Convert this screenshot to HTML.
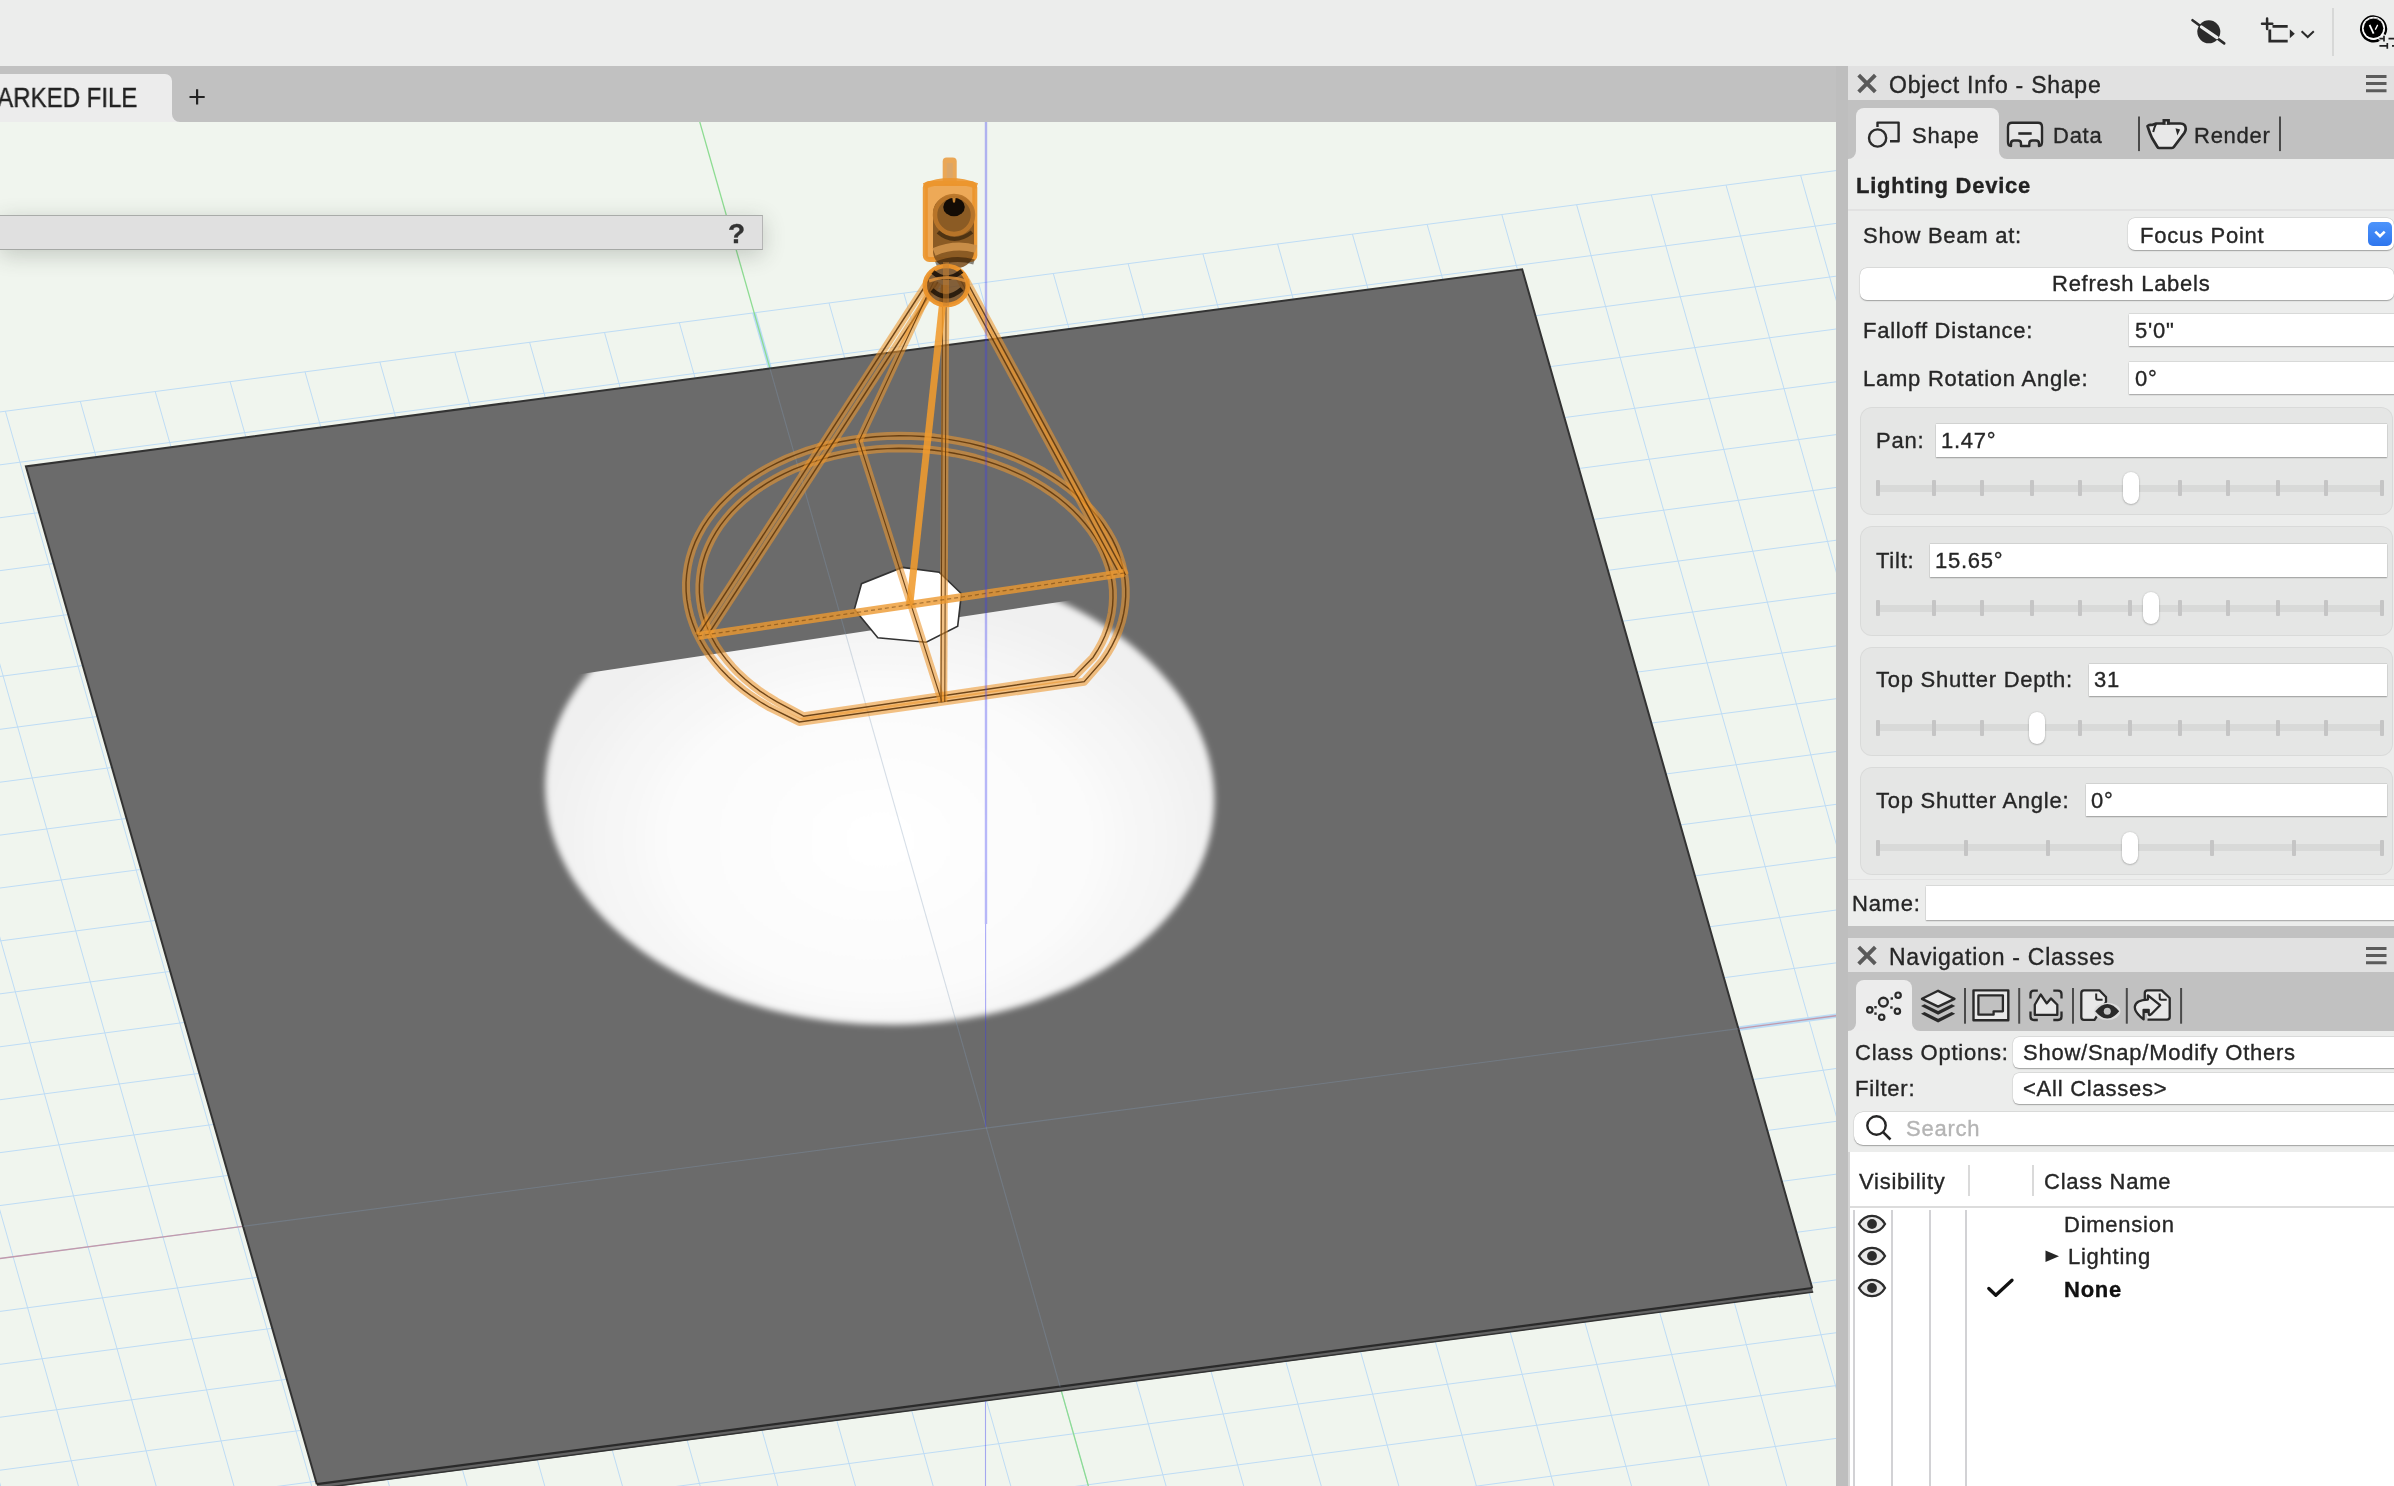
<!DOCTYPE html><html><head><meta charset="utf-8"><style>
*{box-sizing:border-box}
html,body{margin:0;padding:0;width:2394px;height:1486px;overflow:hidden;background:#ecedec;font-family:"Liberation Sans", sans-serif;color:#262626}
.abs{position:absolute}
.t{position:absolute;white-space:pre;font-size:23px;line-height:1;will-change:transform;-webkit-text-stroke:0.35px currentColor}
.fld{position:absolute;background:#fff;box-shadow:0 1px 1.2px rgba(0,0,0,0.3), 0 -0.6px 0 rgba(0,0,0,0.1), 0 0 0 0.5px rgba(0,0,0,0.05);}
.grp{position:absolute;background:#e5e6e5;border-radius:12px;box-shadow:inset 0 0 0 1px rgba(0,0,0,0.05)}
.sep{position:absolute;background:#525252;width:2px}
</style></head><body>
<div class="abs" style="left:0;top:0;width:2394px;height:66px;background:#ecedec"></div><svg class="abs" style="left:2180px;top:8px" width="214" height="50" viewBox="2180 8 214 50">
<circle cx="2208.8" cy="31.8" r="11.5" fill="#2b2b2b"/>
<line x1="2192.5" y1="20.2" x2="2224.2" y2="43.4" stroke="#2b2b2b" stroke-width="2.6" stroke-linecap="round"/>
<line x1="2201.5" y1="27" x2="2217" y2="37.6" stroke="#ecedec" stroke-width="3.3" stroke-linecap="round"/>
<path d="M2262 23.8H2272.3M2267.1 18.6V29" stroke="#2b2b2b" stroke-width="2.5" stroke-linecap="round"/>
<path d="M2272.5 26.4H2287.7M2269.8 29.5V41.1H2287.7" stroke="#2b2b2b" stroke-width="2.8" fill="none"/>
<path d="M2289.8 29.3L2294.8 33.8L2289.8 38.3Z" fill="#2b2b2b"/>
<path d="M2301.6 31.2L2307.7 37L2313.8 31.2" stroke="#2b2b2b" stroke-width="2" fill="none"/>
<line x1="2333" y1="8" x2="2333" y2="56" stroke="#d0d0d0" stroke-width="1.5"/>
<path d="M2381.5 38.3A12.3 12.3 0 1 1 2384.5 34.5" fill="none" stroke="#000" stroke-width="2.5"/>
<circle cx="2373.5" cy="28.2" r="10.9" fill="none" stroke="#fff" stroke-width="1.1"/>
<circle cx="2373.5" cy="28.2" r="9.8" fill="#000"/>
<path d="M2369.6 24.9L2373.6 33.6" stroke="#fff" stroke-width="1.8"/>
<path d="M2377.7 24.9L2375.3 29.6" stroke="#fff" stroke-width="1.3"/>
<circle cx="2380.5" cy="38.5" r="2.2" fill="#ecedec"/>
<path d="M2379.4 38.6H2384.4M2384 35.8V41.5M2388.5 38.6H2394M2379.4 45.9H2387.5M2387.3 43V48.8M2392 45.9H2394" stroke="#222" stroke-width="1.7"/>
</svg><div class="abs" style="left:0;top:66px;width:1836px;height:56px;background:#c1c1c1"></div>
<div class="abs" style="left:-20px;top:74px;width:192px;height:48px;background:#ececec;border-top-right-radius:7px"></div>
<svg class="abs" style="left:172px;top:114px" width="8" height="8"><path d="M0 0V8H8A8 8 0 0 1 0 0Z" fill="#ececec"/></svg>
<div class="t" style="left:-24.5px;top:84.2px;font-size:27.7px;color:#222;transform:scaleX(0.868);transform-origin:160.5px 0">ARKED FILE</div>
<svg class="abs" style="left:185px;top:85px" width="24" height="24"><path d="M4.5 12H19.7M12.1 4.3V19.5" stroke="#222" stroke-width="2.2"/></svg>
<svg class="abs" style="left:0;top:122px" width="1836" height="1364" viewBox="0 122 1836 1364">
<defs>
<filter id="blur" x="-10%" y="-10%" width="120%" height="120%"><feGaussianBlur stdDeviation="3.2"/></filter>
<radialGradient id="lg" gradientUnits="userSpaceOnUse" cx="880" cy="840" r="340" gradientTransform="translate(880 840) scale(1 0.72) translate(-880 -840)">
<stop offset="0" stop-color="#ffffff"/><stop offset="0.6" stop-color="#fbfbfb"/><stop offset="1" stop-color="#f0f0f0"/></radialGradient>
<clipPath id="cut"><path d="M0 761.2L1836 485.4L1836 1486L0 1486Z"/></clipPath>
<clipPath id="planeclip"><path d="M25.9 466.4L1522.2 269.3L1812.2 1288L316.8 1484.2Z"/></clipPath>
</defs>
<rect x="0" y="122" width="1836" height="1364" fill="#f0f5ee"/>
<path d="M-1495.2 608.4L-898.7 2702.0M-1420.1 598.6L-823.6 2692.0M-1345.0 588.7L-748.6 2681.9M-1269.9 578.8L-673.5 2671.9M-1194.8 569.0L-598.4 2661.9M-1119.7 559.1L-523.4 2651.9M-1044.6 549.2L-448.4 2641.9M-969.5 539.3L-373.3 2631.9M-894.5 529.5L-298.3 2621.9M-819.4 519.6L-223.3 2611.8M-744.4 509.8L-148.3 2601.8M-669.4 499.9L-73.3 2591.8M-594.4 490.0L1.6 2581.8M-519.4 480.2L76.6 2571.8M-444.4 470.3L151.6 2561.8M-369.4 460.5L226.5 2551.8M-294.4 450.6L301.4 2541.8M-219.4 440.8L376.4 2531.8M-144.5 430.9L451.3 2521.8M-69.5 421.0L526.2 2511.8M5.4 411.2L601.1 2501.8M80.3 401.4L676.0 2491.8M155.2 391.5L750.8 2481.8M230.1 381.7L825.7 2471.9M305.0 371.8L900.5 2461.9M379.9 362.0L975.4 2451.9M454.8 352.1L1050.2 2441.9M529.6 342.3L1125.0 2431.9M604.5 332.5L1199.8 2421.9M679.3 322.6L1274.6 2411.9M754.1 312.8L1349.4 2402.0M829.0 302.9L1424.2 2392.0M903.8 293.1L1499.0 2382.0M978.6 283.3L1573.7 2372.0M1053.3 273.5L1648.5 2362.1M1128.1 263.6L1723.2 2352.1M1202.9 253.8L1797.9 2342.1M1277.6 244.0L1872.6 2332.1M1352.4 234.1L1947.4 2322.2M1427.1 224.3L2022.0 2312.2M1501.8 214.5L2096.7 2302.2M1576.6 204.7L2171.4 2292.3M1651.3 194.9L2246.1 2282.3M1726.0 185.0L2320.7 2272.3M1800.6 175.2L2395.4 2262.4M1875.3 165.4L2470.0 2252.4M1950.0 155.6L2544.6 2242.5M2024.6 145.8L2619.2 2232.5M2099.3 136.0L2693.8 2222.6M2173.9 126.2L2768.4 2212.6M2248.5 116.4L2843.0 2202.6M2323.1 106.6L2917.6 2192.7M2397.7 96.7L2992.1 2182.7M2472.3 86.9L3066.7 2172.8M2546.9 77.1L3141.2 2162.9M2621.5 67.3L3215.8 2152.9M2696.0 57.5L3290.3 2143.0M2770.6 47.7L3364.8 2133.0M2845.1 37.9L3439.3 2123.1M2919.6 28.1L3513.8 2113.1M2994.2 18.4L3588.3 2103.2M-2247.1 707.3L3738.8 -79.5M-2232.5 758.4L3753.3 -28.7M-2218.0 809.5L3767.7 22.1M-2203.4 860.6L3782.2 72.9M-2188.9 911.7L3796.7 123.7M-2174.3 962.8L3811.2 174.5M-2159.7 1013.8L3825.7 225.4M-2145.2 1064.9L3840.1 276.2M-2130.6 1116.0L3854.6 327.0M-2116.1 1167.1L3869.1 377.8M-2101.5 1218.2L3883.6 428.6M-2087.0 1269.3L3898.1 479.4M-2072.4 1320.4L3912.5 530.2M-2057.8 1371.5L3927.0 581.1M-2043.3 1422.6L3941.5 631.9M-2028.7 1473.7L3956.0 682.7M-2014.2 1524.8L3970.5 733.5M-1999.6 1575.9L3984.9 784.3M-1985.0 1627.0L3999.4 835.1M-1970.5 1678.1L4013.9 885.9M-1955.9 1729.2L4028.4 936.8M-1941.4 1780.3L4042.9 987.6M-1926.8 1831.4L4057.3 1038.4M-1912.3 1882.5L4071.8 1089.2M-1897.7 1933.6L4086.3 1140.0M-1883.1 1984.7L4100.8 1190.8M-1868.6 2035.8L4115.3 1241.7M-1854.0 2086.9L4129.7 1292.5M-1839.5 2138.0L4144.2 1343.3M-1824.9 2189.1L4158.7 1394.1M-1810.3 2240.2L4173.2 1444.9M-1795.8 2291.3L4187.7 1495.7M-1781.2 2342.4L4202.2 1546.5M-1766.7 2393.5L4216.6 1597.4M-1752.1 2444.6L4231.1 1648.2M-1737.6 2495.7L4245.6 1699.0M-1723.0 2546.8L4260.1 1749.8M-1708.4 2597.9L4274.6 1800.6M-1693.9 2649.0L4289.0 1851.4M-1679.3 2700.1L4303.5 1902.3M-1664.8 2751.2L4318.0 1953.1M-1650.2 2802.3L4332.5 2003.9" stroke="#bedcf5" stroke-width="1" fill="none"/>
<line x1="1696.6" y1="1034.2" x2="1958.1" y2="999.6" stroke="#bcdcf5" stroke-width="4.6"/>
<line x1="-2014.2" y1="1524.8" x2="3970.5" y2="733.5" stroke="#c29aac" stroke-width="1.4"/>
<line x1="754.1" y1="312.8" x2="783.2" y2="414.7" stroke="#b9dcf6" stroke-width="4"/>
<line x1="405.7" y1="-910.1" x2="1349.4" y2="2402.0" stroke="#8ddc92" stroke-width="1.3"/>
<path d="M316.8 1484.2L1812.2 1288L1813.2 1292.2L317.5 1489Z" fill="#636363"/>
<path d="M317.5 1488.5L1813.2 1292" stroke="#333" stroke-width="1.5"/>
<path d="M25.9 466.4L1522.2 269.3L1812.2 1288L316.8 1484.2Z" fill="#6b6b6b"/>
<path d="M316.8 1484.2L25.9 466.4L1522.2 269.3L1812.2 1288" fill="none" stroke="#333" stroke-width="2"/>
<path d="M316.8 1484.2L1812.2 1288" fill="none" stroke="#2a2a2a" stroke-width="2.2"/>
<g clip-path="url(#cut)"><g filter="url(#blur)"><path d="M870.6 1024.3L858.9 1023.7L847.3 1022.8L835.7 1021.7L824.2 1020.2L812.7 1018.5L801.3 1016.5L790.0 1014.2L778.8 1011.7L767.7 1008.9L756.8 1005.8L746.0 1002.5L735.4 998.9L724.9 995.1L714.7 991.0L704.6 986.7L694.8 982.1L685.2 977.3L675.8 972.3L666.7 967.1L657.8 961.7L649.2 956.0L640.9 950.2L632.8 944.1L625.1 937.9L617.7 931.5L610.6 924.9L603.8 918.2L597.4 911.3L591.3 904.3L585.6 897.1L580.2 889.8L575.2 882.4L570.5 874.9L566.3 867.3L562.4 859.6L558.9 851.8L555.8 843.9L553.1 836.0L550.7 828.0L548.8 820.0L547.3 812.0L546.2 803.9L545.5 795.8L545.2 787.7L545.3 779.6L545.9 771.6L546.8 763.5L548.1 755.5L549.9 747.5L552.0 739.6L554.5 731.8L557.5 724.0L560.8 716.3L564.5 708.8L568.6 701.3L573.1 693.9L578.0 686.6L583.2 679.5L588.8 672.5L594.7 665.7L601.0 659.0L607.6 652.5L614.6 646.1L621.9 639.9L629.5 633.9L637.4 628.1L645.5 622.6L654.0 617.2L662.8 612.0L671.8 607.0L681.1 602.3L690.6 597.8L700.3 593.6L710.3 589.6L720.5 585.8L730.8 582.3L741.4 579.0L752.1 576.0L763.0 573.3L774.0 570.8L785.1 568.6L796.4 566.7L807.7 565.1L819.2 563.7L830.7 562.6L842.3 561.8L853.9 561.3L865.5 561.0L877.2 561.1L888.9 561.4L900.6 562.0L912.2 562.9L923.8 564.0L935.4 565.5L946.8 567.2L958.2 569.2L969.5 571.5L980.7 574.0L991.8 576.8L1002.7 579.9L1013.5 583.2L1024.1 586.8L1034.6 590.6L1044.8 594.7L1054.9 599.0L1064.7 603.6L1074.3 608.3L1083.7 613.3L1092.9 618.6L1101.7 624.0L1110.3 629.7L1118.6 635.5L1126.7 641.6L1134.4 647.8L1141.8 654.2L1148.9 660.7L1155.7 667.5L1162.1 674.4L1168.2 681.4L1173.9 688.6L1179.3 695.8L1184.3 703.2L1189.0 710.8L1193.3 718.4L1197.1 726.1L1200.6 733.9L1203.7 741.7L1206.5 749.7L1208.8 757.6L1210.7 765.7L1212.2 773.7L1213.3 781.8L1214.0 789.9L1214.3 798.0L1214.2 806.1L1213.7 814.1L1212.7 822.2L1211.4 830.2L1209.7 838.1L1207.5 846.0L1205.0 853.9L1202.0 861.7L1198.7 869.3L1195.0 876.9L1190.9 884.4L1186.4 891.8L1181.5 899.1L1176.3 906.2L1170.7 913.2L1164.8 920.0L1158.5 926.7L1151.9 933.2L1144.9 939.6L1137.7 945.8L1130.1 951.7L1122.2 957.5L1114.0 963.1L1105.5 968.5L1096.7 973.7L1087.7 978.6L1078.4 983.4L1068.9 987.9L1059.2 992.1L1049.2 996.1L1039.0 999.9L1028.7 1003.4L1018.1 1006.7L1007.4 1009.7L996.6 1012.4L985.5 1014.9L974.4 1017.1L963.1 1019.0L951.8 1020.6L940.3 1022.0L928.8 1023.1L917.2 1023.9L905.6 1024.4L894.0 1024.7L882.3 1024.6Z" fill="url(#lg)"/></g></g>
<g clip-path="url(#planeclip)">
<line x1="-2014.2" y1="1524.8" x2="3970.5" y2="733.5" stroke="rgba(130,155,185,0.32)" stroke-width="1.1"/>
<line x1="405.7" y1="-910.1" x2="1349.4" y2="2402.0" stroke="rgba(130,155,185,0.32)" stroke-width="1.1"/>
</g>
<g>
<path d="M902.2 567.4L939.2 572.2L961.4 593.7L957.7 626.2L926.2 642.2L877.8 637.7L854.4 609.2L861.5 583.7Z" fill="#ffffff" stroke="#333" stroke-width="1.6"/>
<path d="M799.3 722.0L769.7 707.5L760.5 702.0L751.8 696.2L743.5 690.1L735.7 683.7L728.4 677.0L721.6 670.1L715.3 662.9L709.6 655.5L704.5 647.9L700.0 640.1L696.1 632.2L692.9 624.1L690.2 616.0L688.2 607.7L686.8 599.4L686.1 591.1L686.0 582.8L686.6 574.5L687.8 566.2L689.6 558.0L692.1 549.9L695.2 541.9L699.0 534.1L703.3 526.4L708.3 518.9L713.8 511.6L719.9 504.5L726.6 497.7L733.8 491.1L741.5 484.9L749.6 478.9L758.3 473.3L767.3 468.0L776.8 463.1L786.7 458.5L796.9 454.4L807.4 450.6L818.2 447.2L829.3 444.3L840.6 441.8L852.1 439.7L863.8 438.0L875.5 436.8L887.4 436.1L899.3 435.8L911.3 435.9L923.2 436.5L935.1 437.6L946.9 439.1L958.5 441.1L970.0 443.4L981.4 446.3L992.5 449.5L1003.3 453.1L1013.9 457.2L1024.1 461.6L1034.0 466.4L1043.5 471.6L1052.6 477.1L1061.3 483.0L1069.5 489.1L1077.3 495.6L1084.5 502.3L1091.2 509.3L1097.3 516.5L1102.9 524.0L1107.9 531.6L1112.4 539.4L1116.2 547.4L1119.3 555.4L1121.9 563.6L1123.8 571.9L1125.1 580.1L1125.7 588.5L1125.7 596.8L1125.0 605.1L1123.7 613.4L1121.8 621.5L1119.2 629.6L1115.9 637.6L1112.1 645.4L1107.7 653.1L1102.6 660.6L1084.2 681.7Z" fill="none" stroke="rgba(236,150,44,0.58)" stroke-width="8" stroke-linejoin="round"/>
<path d="M799.3 722.0L769.7 707.5L760.5 702.0L751.8 696.2L743.5 690.1L735.7 683.7L728.4 677.0L721.6 670.1L715.3 662.9L709.6 655.5L704.5 647.9L700.0 640.1L696.1 632.2L692.9 624.1L690.2 616.0L688.2 607.7L686.8 599.4L686.1 591.1L686.0 582.8L686.6 574.5L687.8 566.2L689.6 558.0L692.1 549.9L695.2 541.9L699.0 534.1L703.3 526.4L708.3 518.9L713.8 511.6L719.9 504.5L726.6 497.7L733.8 491.1L741.5 484.9L749.6 478.9L758.3 473.3L767.3 468.0L776.8 463.1L786.7 458.5L796.9 454.4L807.4 450.6L818.2 447.2L829.3 444.3L840.6 441.8L852.1 439.7L863.8 438.0L875.5 436.8L887.4 436.1L899.3 435.8L911.3 435.9L923.2 436.5L935.1 437.6L946.9 439.1L958.5 441.1L970.0 443.4L981.4 446.3L992.5 449.5L1003.3 453.1L1013.9 457.2L1024.1 461.6L1034.0 466.4L1043.5 471.6L1052.6 477.1L1061.3 483.0L1069.5 489.1L1077.3 495.6L1084.5 502.3L1091.2 509.3L1097.3 516.5L1102.9 524.0L1107.9 531.6L1112.4 539.4L1116.2 547.4L1119.3 555.4L1121.9 563.6L1123.8 571.9L1125.1 580.1L1125.7 588.5L1125.7 596.8L1125.0 605.1L1123.7 613.4L1121.8 621.5L1119.2 629.6L1115.9 637.6L1112.1 645.4L1107.7 653.1L1102.6 660.6L1084.2 681.7Z" fill="none" stroke="rgba(95,55,12,0.9)" stroke-width="1.4"/>
<path d="M803.6 716.2L776.6 701.7L768.1 696.5L760.0 691.1L752.3 685.3L745.1 679.2L738.3 672.9L732.1 666.4L726.3 659.6L721.0 652.7L716.3 645.6L712.2 638.3L708.6 630.9L705.6 623.4L703.2 615.7L701.3 608.0L700.1 600.3L699.4 592.6L699.4 584.8L700.0 577.1L701.1 569.4L702.9 561.7L705.2 554.2L708.2 546.8L711.7 539.5L715.8 532.3L720.4 525.4L725.6 518.6L731.3 512.0L737.5 505.7L744.2 499.6L751.4 493.8L759.0 488.3L767.0 483.1L775.5 478.2L784.3 473.6L793.5 469.4L803.1 465.6L812.9 462.1L823.0 458.9L833.3 456.2L843.9 453.9L854.6 451.9L865.5 450.4L876.5 449.3L887.6 448.6L898.7 448.3L909.9 448.5L921.0 449.1L932.1 450.0L943.2 451.4L954.1 453.2L964.9 455.4L975.5 458.0L985.9 461.0L996.1 464.4L1006.0 468.2L1015.6 472.3L1024.9 476.7L1033.9 481.5L1042.5 486.6L1050.7 492.1L1058.5 497.8L1065.8 503.8L1072.7 510.0L1079.0 516.5L1084.9 523.2L1090.3 530.1L1095.1 537.2L1099.4 544.5L1103.1 551.9L1106.2 559.4L1108.8 567.0L1110.7 574.6L1112.1 582.4L1112.9 590.1L1113.0 597.9L1112.6 605.6L1111.6 613.3L1109.9 621.0L1107.7 628.5L1104.9 636.0L1101.5 643.3L1097.5 650.5L1093.0 657.5L1074.5 676.4Z" fill="none" stroke="rgba(236,150,44,0.58)" stroke-width="8" stroke-linejoin="round"/>
<path d="M803.6 716.2L776.6 701.7L768.1 696.5L760.0 691.1L752.3 685.3L745.1 679.2L738.3 672.9L732.1 666.4L726.3 659.6L721.0 652.7L716.3 645.6L712.2 638.3L708.6 630.9L705.6 623.4L703.2 615.7L701.3 608.0L700.1 600.3L699.4 592.6L699.4 584.8L700.0 577.1L701.1 569.4L702.9 561.7L705.2 554.2L708.2 546.8L711.7 539.5L715.8 532.3L720.4 525.4L725.6 518.6L731.3 512.0L737.5 505.7L744.2 499.6L751.4 493.8L759.0 488.3L767.0 483.1L775.5 478.2L784.3 473.6L793.5 469.4L803.1 465.6L812.9 462.1L823.0 458.9L833.3 456.2L843.9 453.9L854.6 451.9L865.5 450.4L876.5 449.3L887.6 448.6L898.7 448.3L909.9 448.5L921.0 449.1L932.1 450.0L943.2 451.4L954.1 453.2L964.9 455.4L975.5 458.0L985.9 461.0L996.1 464.4L1006.0 468.2L1015.6 472.3L1024.9 476.7L1033.9 481.5L1042.5 486.6L1050.7 492.1L1058.5 497.8L1065.8 503.8L1072.7 510.0L1079.0 516.5L1084.9 523.2L1090.3 530.1L1095.1 537.2L1099.4 544.5L1103.1 551.9L1106.2 559.4L1108.8 567.0L1110.7 574.6L1112.1 582.4L1112.9 590.1L1113.0 597.9L1112.6 605.6L1111.6 613.3L1109.9 621.0L1107.7 628.5L1104.9 636.0L1101.5 643.3L1097.5 650.5L1093.0 657.5L1074.5 676.4Z" fill="none" stroke="rgba(95,55,12,0.9)" stroke-width="1.4"/>
<path d="M929.0 280.0L698.0 635.4" fill="none" stroke="rgba(236,150,44,0.58)" stroke-width="7.5" stroke-linejoin="round"/>
<path d="M929.0 280.0L698.0 635.4" fill="none" stroke="rgba(95,55,12,0.9)" stroke-width="1.4"/>
<path d="M937.8 282.0L708.8 633.3" fill="none" stroke="rgba(236,150,44,0.58)" stroke-width="7.5" stroke-linejoin="round"/>
<path d="M937.8 282.0L708.8 633.3" fill="none" stroke="rgba(95,55,12,0.9)" stroke-width="1.4"/>
<path d="M933.5 282.0L858.9 441.0L942.0 702.0" fill="none" stroke="rgba(236,150,44,0.58)" stroke-width="7.5" stroke-linejoin="round"/>
<path d="M933.5 282.0L858.9 441.0L942.0 702.0" fill="none" stroke="rgba(95,55,12,0.9)" stroke-width="1.1"/>
<path d="M945.6 285.0L943.5 702.0" fill="none" stroke="rgba(236,150,44,0.58)" stroke-width="7.5" stroke-linejoin="round"/>
<path d="M942.6 285L941 702M946.1 285L944.8 702" stroke="rgba(95,55,12,0.9)" stroke-width="1" fill="none"/>
<path d="M944.6 285.0L909.7 605.3" fill="none" stroke="rgba(240,155,45,0.88)" stroke-width="7" stroke-linejoin="round"/>
<path d="M959.5 278.0L1119.0 573.0" fill="none" stroke="rgba(236,150,44,0.58)" stroke-width="7.5" stroke-linejoin="round"/>
<path d="M959.5 278.0L1119.0 573.0" fill="none" stroke="rgba(95,55,12,0.9)" stroke-width="1.4"/>
<path d="M966.0 280.0L1125.5 575.0" fill="none" stroke="rgba(236,150,44,0.58)" stroke-width="7.5" stroke-linejoin="round"/>
<path d="M966.0 280.0L1125.5 575.0" fill="none" stroke="rgba(95,55,12,0.9)" stroke-width="1.4"/>
<path d="M697.9 636.0L1124.0 573.0" fill="none" stroke="rgba(236,152,48,0.8)" stroke-width="8" stroke-linejoin="round"/>
<path d="M697.9 636L1124 573" stroke="rgba(95,55,12,0.5)" stroke-width="1.2" stroke-dasharray="4 3"/>
</g>
<g>
<rect x="942.7" y="157.5" width="14" height="27" rx="4" fill="rgba(232,148,48,0.8)"/>
<rect x="946.8" y="163" width="6" height="18" fill="rgba(215,165,110,0.75)"/>
<rect x="925.3" y="183.5" width="49.5" height="76" rx="4" fill="rgba(236,156,62,0.86)" stroke="rgba(236,148,42,0.92)" stroke-width="5"/>
<path d="M924 186Q950 176 977 186" stroke="rgba(236,150,45,0.9)" stroke-width="6" fill="none"/>
<rect x="933" y="196" width="41" height="72" rx="17" fill="rgba(125,80,30,0.88)"/>
<ellipse cx="954" cy="215" rx="19" ry="19" fill="none" stroke="rgba(185,118,42,0.95)" stroke-width="4.5"/>
<path d="M938 232Q954 246 972 232" stroke="rgba(30,18,6,0.55)" stroke-width="4" fill="none"/>
<path d="M934 252Q955 243 976 249" stroke="rgba(205,145,75,0.92)" stroke-width="8" fill="none"/>
<path d="M936 264Q955 256 974 262" stroke="rgba(30,18,6,0.5)" stroke-width="5" fill="none"/>
<ellipse cx="954" cy="207" rx="10.8" ry="9.2" fill="#140c05"/>
<path d="M952.3 197.5H955.7L955 202.5H953Z" fill="rgba(210,140,55,0.95)"/>
<ellipse cx="946.3" cy="285.5" rx="21.5" ry="19.5" fill="rgba(110,68,25,0.85)" stroke="rgba(236,148,42,0.95)" stroke-width="4.5"/>
<path d="M933 272Q946 284 962 271" stroke="rgba(15,8,2,0.8)" stroke-width="4.5" fill="none"/>
<path d="M932 290Q946 303 962 289" stroke="rgba(15,8,2,0.75)" stroke-width="4.5" fill="none"/>
<path d="M929 281Q947 274 966 281" stroke="rgba(230,150,60,0.8)" stroke-width="3" fill="none"/>
<rect x="943" y="262" width="6" height="44" fill="rgba(200,130,50,0.5)"/>
</g><line x1="986" y1="122" x2="986" y2="924" stroke="rgba(60,60,240,0.36)" stroke-width="2.4"/><line x1="985.6" y1="924" x2="985.6" y2="1127" stroke="rgba(60,60,240,0.42)" stroke-width="1.1"/><line x1="985.5" y1="1401" x2="985.5" y2="1486" stroke="rgba(60,60,240,0.42)" stroke-width="1.1"/></svg><div class="abs" style="left:0;top:215px;width:763px;height:35px;background:#e0e0e0;border-top:1px solid #a9aca9;border-right:1px solid #b5b5b5;border-bottom:1px solid #a5a8a5;box-shadow:0 5px 22px rgba(50,60,50,0.24)"></div>
<div class="t" style="left:727.5px;top:220px;font-size:28px;font-weight:700;color:#333">?</div>
<div class="abs" style="left:1836px;top:66px;width:12px;height:1420px;background:#bebebe"></div><div class="abs" style="left:1848px;top:66px;width:546px;height:34px;background:#e1e1e1"></div>
<div class="abs" style="left:1848px;top:100px;width:546px;height:59px;background:#c1c1c1"></div>
<div class="abs" style="left:1848px;top:159px;width:546px;height:767px;background:#ecedec"></div>
<div class="abs" style="left:1848px;top:926px;width:546px;height:12px;background:#c1c1c1"></div>
<div class="abs" style="left:1848px;top:938px;width:546px;height:34px;background:#e1e1e1"></div>
<div class="abs" style="left:1848px;top:972px;width:546px;height:59px;background:#c1c1c1"></div>
<div class="abs" style="left:1848px;top:1031px;width:546px;height:121px;background:#ecedec"></div>
<div class="abs" style="left:1848px;top:1152px;width:546px;height:334px;background:#ffffff"></div>
<svg class="abs" style="left:1850px;top:66px" width="544" height="34" viewBox="0 0 544 34">
<path d="M8.7 9.2L25.3 25.8M25.3 9.2L8.7 25.8" stroke="#5a5a5a" stroke-width="3.9"/>
<path d="M516 10.6H536.5M516 17.4H536.5M516 24.8H536.5" stroke="#5b5b5b" stroke-width="3"/>
</svg>
<div class="t" style="left:1889.3px;top:73.8px;font-size:23px;font-weight:400;color:#262626;letter-spacing:0.75px;">Object Info - Shape</div>
<svg class="abs" style="left:1850px;top:938px" width="544" height="34" viewBox="0 0 544 34">
<path d="M8.7 9.2L25.3 25.8M25.3 9.2L8.7 25.8" stroke="#5a5a5a" stroke-width="3.9"/>
<path d="M516 10.6H536.5M516 17.4H536.5M516 24.8H536.5" stroke="#5b5b5b" stroke-width="3"/>
</svg>
<div class="t" style="left:1889.3px;top:945.8px;font-size:23px;font-weight:400;color:#262626;letter-spacing:0.75px;">Navigation - Classes</div>
<div class="abs" style="left:1856px;top:108px;width:143px;height:51px;background:#ececec;border-radius:8px 8px 0 0"></div>
<svg class="abs" style="left:1848px;top:151px" width="8" height="8"><path d="M8 0V8H0A8 8 0 0 0 8 0Z" fill="#ececec"/></svg>
<svg class="abs" style="left:1999px;top:151px" width="8" height="8"><path d="M0 0V8H8A8 8 0 0 1 0 0Z" fill="#ececec"/></svg>
<div class="abs" style="left:1856px;top:980px;width:56px;height:51px;background:#ececec;border-radius:8px 8px 0 0"></div>
<svg class="abs" style="left:1848px;top:1023px" width="8" height="8"><path d="M8 0V8H0A8 8 0 0 0 8 0Z" fill="#ececec"/></svg>
<svg class="abs" style="left:1912px;top:1023px" width="8" height="8"><path d="M0 0V8H8A8 8 0 0 1 0 0Z" fill="#ececec"/></svg>
<svg class="abs" style="left:1848px;top:100px" width="546" height="59" viewBox="1848 100 546 59">
<g fill="#e8e8e8" stroke="#2a2a2a" stroke-width="2.4" stroke-linejoin="round">
<path d="M1877.5 127V122.6H1898.6V141.2H1890"/>
<circle cx="1877.6" cy="138" r="8.6"/>
<path d="M2011 146V143.5Q2011 140.5 2014 140.5H2018Q2021 140.5 2021 143.5V146H2029.3V143.5Q2029.3 140.5 2032.3 140.5H2036Q2039 140.5 2039 143.5V146Q2042 146 2042 142V127Q2042 122.8 2038 122.8H2012Q2008 122.8 2008 127V142Q2008 146 2011 146Z"/>
<path d="M2156.2 123.5H2180.3Q2185.7 123.5 2185.7 129Q2185.7 131 2184.3 133L2174 146.8Q2173.2 148 2172 148H2159.2Q2158 148 2157.3 146.8L2152 138Q2150 134 2148.5 129L2147.5 126Q2150 124.3 2152 125Z" stroke-width="2.7"/>
<path d="M2156.2 123.5Q2154 128 2153.2 132" fill="none" stroke-width="2"/>
</g>
<path d="M2018.3 133.5H2031.7" stroke="#2a2a2a" stroke-width="2.6"/>
<rect x="2162.5" y="119" width="7.4" height="5.5" fill="#2a2a2a"/>
<rect x="2165.6" y="121.5" width="1.3" height="3" fill="#e8e8e8"/>
<path d="M2175.5 128.2L2180.2 129.4L2177.4 135.4Z" fill="#2a2a2a"/>
<rect x="2138" y="116.5" width="2" height="34.6" fill="#4a4a4a"/>
<rect x="2279" y="116.5" width="2" height="34.6" fill="#4a4a4a"/>
</svg>
<div class="t" style="left:1911.6px;top:125.4px;font-size:22px;font-weight:400;color:#262626;letter-spacing:0.75px;">Shape</div>
<div class="t" style="left:2053.1px;top:125.4px;font-size:22px;font-weight:400;color:#262626;letter-spacing:0.75px;">Data</div>
<div class="t" style="left:2194.1px;top:125.4px;font-size:22px;font-weight:400;color:#262626;letter-spacing:0.75px;">Render</div>
<div class="t" style="left:1855.8px;top:175.1px;font-size:22px;font-weight:700;color:#222;letter-spacing:0.75px;">Lighting Device</div>
<div class="abs" style="left:1848px;top:209px;width:546px;height:1.5px;background:#e2e2e2"></div>
<div class="t" style="left:1863.4px;top:225.0px;font-size:22px;font-weight:400;color:#262626;letter-spacing:0.75px;">Show Beam at:</div>
<div class="fld" style="left:2128px;top:218px;width:266px;height:32px;border-radius:7px"></div>
<div class="abs" style="left:2368px;top:222px;width:24px;height:24px;border-radius:5px;background:linear-gradient(#4d94fb,#2f76ee)"></div>
<svg class="abs" style="left:2368px;top:222px" width="24" height="24"><path d="M7.3 9.6L12 14.2L16.7 9.6" stroke="#fff" stroke-width="2.6" fill="none"/></svg>
<div class="t" style="left:2139.5px;top:225.0px;font-size:22px;font-weight:400;color:#262626;letter-spacing:0.75px;">Focus Point</div>
<div class="fld" style="left:1860px;top:268px;width:534px;height:32px;border-radius:7px"></div>
<div class="t" style="left:2051.6px;top:272.9px;font-size:22px;font-weight:400;color:#262626;letter-spacing:0.75px;">Refresh Labels</div>
<div class="t" style="left:1863.4px;top:319.7px;font-size:22px;font-weight:400;color:#262626;letter-spacing:0.75px;">Falloff Distance:</div>
<div class="fld" style="left:2129px;top:314px;width:271px;height:32px;border-radius:0px"></div>
<div class="t" style="left:2135.4px;top:319.7px;font-size:22px;font-weight:400;color:#262626;letter-spacing:0.75px;">5'0"</div>
<div class="t" style="left:1863.4px;top:368.3px;font-size:22px;font-weight:400;color:#262626;letter-spacing:0.75px;">Lamp Rotation Angle:</div>
<div class="fld" style="left:2129px;top:362px;width:271px;height:32px;border-radius:0px"></div>
<div class="t" style="left:2135.4px;top:368.3px;font-size:22px;font-weight:400;color:#262626;letter-spacing:0.75px;">0°</div>
<div class="grp" style="left:1860px;top:406.5px;width:533px;height:108.5px"></div>
<div class="t" style="left:1875.6px;top:429.7px;font-size:22px;font-weight:400;color:#262626;letter-spacing:0.75px;">Pan:</div>
<div class="fld" style="left:1935.6px;top:424px;width:451.4000000000001px;height:33px;border-radius:0px"></div>
<div class="t" style="left:1940.5px;top:429.7px;font-size:22px;font-weight:400;color:#262626;letter-spacing:0.75px;">1.47°</div>
<div class="abs" style="left:1878px;top:484.5px;width:505px;height:7px;background:#d8d9d8;border-radius:3px"></div>
<div class="abs" style="left:1876px;top:480px;width:4px;height:16px;background:#c5c5c5;border-radius:1px"></div>
<div class="abs" style="left:1932px;top:480px;width:4px;height:16px;background:#c5c5c5;border-radius:1px"></div>
<div class="abs" style="left:1980px;top:480px;width:4px;height:16px;background:#c5c5c5;border-radius:1px"></div>
<div class="abs" style="left:2030px;top:480px;width:4px;height:16px;background:#c5c5c5;border-radius:1px"></div>
<div class="abs" style="left:2078px;top:480px;width:4px;height:16px;background:#c5c5c5;border-radius:1px"></div>
<div class="abs" style="left:2128px;top:480px;width:4px;height:16px;background:#c5c5c5;border-radius:1px"></div>
<div class="abs" style="left:2178px;top:480px;width:4px;height:16px;background:#c5c5c5;border-radius:1px"></div>
<div class="abs" style="left:2226px;top:480px;width:4px;height:16px;background:#c5c5c5;border-radius:1px"></div>
<div class="abs" style="left:2276px;top:480px;width:4px;height:16px;background:#c5c5c5;border-radius:1px"></div>
<div class="abs" style="left:2324px;top:480px;width:4px;height:16px;background:#c5c5c5;border-radius:1px"></div>
<div class="abs" style="left:2380px;top:480px;width:4px;height:16px;background:#c5c5c5;border-radius:1px"></div>
<div class="abs" style="left:2123px;top:472px;width:16px;height:32px;background:#fff;border-radius:8px;box-shadow:0 0.5px 2px rgba(0,0,0,0.35)"></div>
<div class="grp" style="left:1860px;top:526px;width:533px;height:109.60000000000002px"></div>
<div class="t" style="left:1875.6px;top:550.1px;font-size:22px;font-weight:400;color:#262626;letter-spacing:0.75px;">Tilt:</div>
<div class="fld" style="left:1930px;top:544px;width:457px;height:33px;border-radius:0px"></div>
<div class="t" style="left:1934.6px;top:550.1px;font-size:22px;font-weight:400;color:#262626;letter-spacing:0.75px;">15.65°</div>
<div class="abs" style="left:1878px;top:604.5px;width:505px;height:7px;background:#d8d9d8;border-radius:3px"></div>
<div class="abs" style="left:1876px;top:600px;width:4px;height:16px;background:#c5c5c5;border-radius:1px"></div>
<div class="abs" style="left:1932px;top:600px;width:4px;height:16px;background:#c5c5c5;border-radius:1px"></div>
<div class="abs" style="left:1980px;top:600px;width:4px;height:16px;background:#c5c5c5;border-radius:1px"></div>
<div class="abs" style="left:2030px;top:600px;width:4px;height:16px;background:#c5c5c5;border-radius:1px"></div>
<div class="abs" style="left:2078px;top:600px;width:4px;height:16px;background:#c5c5c5;border-radius:1px"></div>
<div class="abs" style="left:2128px;top:600px;width:4px;height:16px;background:#c5c5c5;border-radius:1px"></div>
<div class="abs" style="left:2178px;top:600px;width:4px;height:16px;background:#c5c5c5;border-radius:1px"></div>
<div class="abs" style="left:2226px;top:600px;width:4px;height:16px;background:#c5c5c5;border-radius:1px"></div>
<div class="abs" style="left:2276px;top:600px;width:4px;height:16px;background:#c5c5c5;border-radius:1px"></div>
<div class="abs" style="left:2324px;top:600px;width:4px;height:16px;background:#c5c5c5;border-radius:1px"></div>
<div class="abs" style="left:2380px;top:600px;width:4px;height:16px;background:#c5c5c5;border-radius:1px"></div>
<div class="abs" style="left:2143px;top:592px;width:16px;height:32px;background:#fff;border-radius:8px;box-shadow:0 0.5px 2px rgba(0,0,0,0.35)"></div>
<div class="grp" style="left:1860px;top:646.7px;width:533px;height:109.0px"></div>
<div class="t" style="left:1875.6px;top:669.4px;font-size:22px;font-weight:400;color:#262626;letter-spacing:0.75px;">Top Shutter Depth:</div>
<div class="fld" style="left:2089px;top:663.6px;width:298px;height:32.799999999999955px;border-radius:0px"></div>
<div class="t" style="left:2094.1px;top:669.4px;font-size:22px;font-weight:400;color:#262626;letter-spacing:0.75px;">31</div>
<div class="abs" style="left:1878px;top:724.2px;width:505px;height:7px;background:#d8d9d8;border-radius:3px"></div>
<div class="abs" style="left:1876px;top:719.7px;width:4px;height:16px;background:#c5c5c5;border-radius:1px"></div>
<div class="abs" style="left:1932px;top:719.7px;width:4px;height:16px;background:#c5c5c5;border-radius:1px"></div>
<div class="abs" style="left:1980px;top:719.7px;width:4px;height:16px;background:#c5c5c5;border-radius:1px"></div>
<div class="abs" style="left:2030px;top:719.7px;width:4px;height:16px;background:#c5c5c5;border-radius:1px"></div>
<div class="abs" style="left:2078px;top:719.7px;width:4px;height:16px;background:#c5c5c5;border-radius:1px"></div>
<div class="abs" style="left:2128px;top:719.7px;width:4px;height:16px;background:#c5c5c5;border-radius:1px"></div>
<div class="abs" style="left:2178px;top:719.7px;width:4px;height:16px;background:#c5c5c5;border-radius:1px"></div>
<div class="abs" style="left:2226px;top:719.7px;width:4px;height:16px;background:#c5c5c5;border-radius:1px"></div>
<div class="abs" style="left:2276px;top:719.7px;width:4px;height:16px;background:#c5c5c5;border-radius:1px"></div>
<div class="abs" style="left:2324px;top:719.7px;width:4px;height:16px;background:#c5c5c5;border-radius:1px"></div>
<div class="abs" style="left:2380px;top:719.7px;width:4px;height:16px;background:#c5c5c5;border-radius:1px"></div>
<div class="abs" style="left:2029px;top:711.7px;width:16px;height:32px;background:#fff;border-radius:8px;box-shadow:0 0.5px 2px rgba(0,0,0,0.35)"></div>
<div class="grp" style="left:1860px;top:766.6px;width:533px;height:108.79999999999995px"></div>
<div class="t" style="left:1875.6px;top:789.7px;font-size:22px;font-weight:400;color:#262626;letter-spacing:0.75px;">Top Shutter Angle:</div>
<div class="fld" style="left:2086px;top:784px;width:301px;height:32px;border-radius:0px"></div>
<div class="t" style="left:2091.1px;top:789.7px;font-size:22px;font-weight:400;color:#262626;letter-spacing:0.75px;">0°</div>
<div class="abs" style="left:1878px;top:844.1px;width:505px;height:7px;background:#d8d9d8;border-radius:3px"></div>
<div class="abs" style="left:1876px;top:839.6px;width:4px;height:16px;background:#c5c5c5;border-radius:1px"></div>
<div class="abs" style="left:1964px;top:839.6px;width:4px;height:16px;background:#c5c5c5;border-radius:1px"></div>
<div class="abs" style="left:2046px;top:839.6px;width:4px;height:16px;background:#c5c5c5;border-radius:1px"></div>
<div class="abs" style="left:2128px;top:839.6px;width:4px;height:16px;background:#c5c5c5;border-radius:1px"></div>
<div class="abs" style="left:2210px;top:839.6px;width:4px;height:16px;background:#c5c5c5;border-radius:1px"></div>
<div class="abs" style="left:2292px;top:839.6px;width:4px;height:16px;background:#c5c5c5;border-radius:1px"></div>
<div class="abs" style="left:2380px;top:839.6px;width:4px;height:16px;background:#c5c5c5;border-radius:1px"></div>
<div class="abs" style="left:2122px;top:831.6px;width:16px;height:32px;background:#fff;border-radius:8px;box-shadow:0 0.5px 2px rgba(0,0,0,0.35)"></div>
<div class="abs" style="left:1848px;top:878.5px;width:546px;height:1.5px;background:#e3e3e3"></div>
<div class="t" style="left:1851.8px;top:892.7px;font-size:22px;font-weight:400;color:#262626;letter-spacing:0.75px;">Name:</div>
<div class="fld" style="left:1925.6px;top:885.8px;width:474.4000000000001px;height:34.700000000000045px;border-radius:0px"></div>
<svg class="abs" style="left:1848px;top:972px" width="546" height="59" viewBox="1848 972 546 59">
<g fill="#e8e8e8" stroke="#2a2a2a" stroke-width="2.4" stroke-linejoin="round">
<circle cx="1883.4" cy="1002.1" r="4.4"/>
<circle cx="1898.1" cy="995.2" r="2.7" stroke-width="2.2"/><circle cx="1869.8" cy="1009.9" r="2.7" stroke-width="2.2"/><circle cx="1897.4" cy="1011.2" r="2.7" stroke-width="2.2"/><circle cx="1881.7" cy="1017.2" r="2.7" stroke-width="2.2"/>
<path d="M1922 998.8L1938.1 990.8L1954.5 998.8L1938.1 1006.6Z"/>
<path d="M1973.5 990.4H2008.3V1020.2H1973.5Z" stroke-width="2.4"/>
<path d="M1978.4 995.3H2002.9V1011.3H1993.6V1014.7H1978.4Z" fill="#c1c1c1" stroke-width="2.3"/>
<path d="M2034.8 1014.9V1004.8L2040.7 994.5L2046.7 1003.4L2050.9 998.4L2057.3 1004.8V1014.9Z" stroke-width="2.3"/>
<path d="M2094.5 1019.8H2084Q2081.3 1019.8 2081.3 1017V993Q2081.3 990.3 2084 990.3H2099.3L2106 997V1002L2094.5 1019.8Z" stroke-width="2.3"/>
<path d="M2147.5 1019.6H2167Q2169.7 1019.6 2169.7 1017V998L2161.7 990.3H2147.5Q2144.8 990.3 2144.8 993V999.6" stroke-width="2.3"/>
</g>
<g fill="none" stroke="#2a2a2a" stroke-width="2.3">
<path d="M2030.5 998.5V994Q2030.5 990.6 2034 990.6H2037.8M2053.3 990.6H2058Q2061.5 990.6 2061.5 994V998.5M2061.5 1011.5V1016.5Q2061.5 1020 2058 1020H2053.3M2037.8 1020H2034Q2030.5 1020 2030.5 1016.5V1011.5"/>
<path d="M2096.2 993.5V998.2Q2096.2 999.7 2097.7 999.7H2102.6" stroke-width="2"/>
<path d="M2159.7 993.5V998.2Q2159.7 999.7 2161.2 999.7H2166.7" stroke-width="2"/>
</g>
<g fill="#2a2a2a">
<rect x="1890.6" y="997.3" width="2.4" height="2.4"/><rect x="1874.3" y="1006" width="2.4" height="2.4"/><rect x="1890.2" y="1006.3" width="2.4" height="2.4"/><rect x="1874.3" y="1012.4" width="2.4" height="2.4"/>
<path d="M1921 1006L1924.5 1004.3L1938.1 1011L1951.7 1004.3L1955.2 1006L1938.1 1014.8Z"/>
<path d="M1921 1013.8L1924.5 1012.1L1938.1 1018.8L1951.7 1012.1L1955.2 1013.8L1938.1 1022.6Z"/>
</g>
<ellipse cx="2107.3" cy="1011.3" rx="13.2" ry="8.6" fill="#dcdcdc"/>
<path d="M2095.2 1011.3Q2107.3 996.8 2119.2 1011.3Q2107.3 1025.8 2095.2 1011.3Z" fill="#2a2a2a"/>
<circle cx="2107.3" cy="1011.3" r="3.5" fill="#c4c4c4"/>
<path d="M2143.6 1019.4Q2134.6 1012.5 2134.8 1007Q2135.4 1000 2147.9 999.6V995.4L2160.1 1005.2L2151.2 1014.2Q2148.7 1016.3 2148.7 1013.5V1009.8H2143.6Z" fill="#e8e8e8" stroke="#2a2a2a" stroke-width="2.3" stroke-linejoin="round"/>
<rect x="2143.3" y="1009.4" width="5.6" height="3.6" fill="#2a2a2a"/>
<rect x="1964" y="988" width="2" height="35.7" fill="#4a4a4a"/>
<rect x="2018.2" y="988" width="2" height="35.7" fill="#4a4a4a"/>
<rect x="2072" y="988" width="2" height="35.7" fill="#4a4a4a"/>
<rect x="2125.8" y="988" width="2" height="35.7" fill="#4a4a4a"/>
<rect x="2180.1" y="988" width="2" height="35.7" fill="#4a4a4a"/>
</svg>
<div class="t" style="left:1855.3px;top:1042.3px;font-size:22px;font-weight:400;color:#262626;letter-spacing:0.75px;">Class Options:</div>
<div class="fld" style="left:2012.5px;top:1036.5px;width:397.5px;height:31.90000000000009px;border-radius:6px"></div>
<div class="t" style="left:2023.1px;top:1042.3px;font-size:22px;font-weight:400;color:#262626;letter-spacing:0.75px;">Show/Snap/Modify Others</div>
<div class="t" style="left:1855.3px;top:1078.2px;font-size:22px;font-weight:400;color:#262626;letter-spacing:0.75px;">Filter:</div>
<div class="fld" style="left:2012.5px;top:1072.8px;width:397.5px;height:31.200000000000045px;border-radius:6px"></div>
<div class="t" style="left:2023.1px;top:1078.2px;font-size:22px;font-weight:400;color:#262626;letter-spacing:0.75px;">&lt;All Classes&gt;</div>
<div class="fld" style="left:1854px;top:1111.7px;width:556px;height:33.09999999999991px;border-radius:9px"></div>
<svg class="abs" style="left:1860px;top:1110px" width="40" height="36"><circle cx="16.5" cy="15.5" r="9.2" stroke="#262626" stroke-width="2.4" fill="none"/><path d="M23.3 22.3L30.5 29.5" stroke="#262626" stroke-width="2.6"/></svg>
<div class="t" style="left:1905.6px;top:1118.3px;font-size:22px;font-weight:400;color:#b4b4b4;letter-spacing:0.75px;">Search</div>
<div class="t" style="left:1859.4px;top:1170.9px;font-size:22px;font-weight:400;color:#262626;letter-spacing:0.75px;">Visibility</div>
<div class="t" style="left:2043.5px;top:1170.9px;font-size:22px;font-weight:400;color:#262626;letter-spacing:0.75px;">Class Name</div>
<div class="abs" style="left:1968px;top:1165px;width:1.5px;height:31px;background:#dadada"></div>
<div class="abs" style="left:2032px;top:1165px;width:1.5px;height:31px;background:#dadada"></div>
<div class="abs" style="left:1850px;top:1205.5px;width:544px;height:2px;background:#dcdcdc"></div>
<div class="abs" style="left:1853px;top:1210px;width:2px;height:276px;background:#d2d2d5"></div>
<div class="abs" style="left:1891px;top:1210px;width:2px;height:276px;background:#d2d2d5"></div>
<div class="abs" style="left:1929px;top:1210px;width:2px;height:276px;background:#d2d2d5"></div>
<div class="abs" style="left:1965px;top:1210px;width:2px;height:276px;background:#d2d2d5"></div>
<div class="abs" style="left:1848px;top:1152px;width:2px;height:334px;background:#d6d6d6"></div>
<svg class="abs" style="left:1857px;top:1214px" width="30" height="20" viewBox="0 0 30 20"><path d="M2 10C5.5 3.8 10 1.9 15 1.9C20 1.9 24.5 3.8 28 10C24.5 16.2 20 18.1 15 18.1C10 18.1 5.5 16.2 2 10Z" fill="#e8e8e8" stroke="#2c2c2c" stroke-width="2.3"/><circle cx="15" cy="10" r="4.9" fill="#2c2c2c"/></svg>
<svg class="abs" style="left:1857px;top:1246px" width="30" height="20" viewBox="0 0 30 20"><path d="M2 10C5.5 3.8 10 1.9 15 1.9C20 1.9 24.5 3.8 28 10C24.5 16.2 20 18.1 15 18.1C10 18.1 5.5 16.2 2 10Z" fill="#e8e8e8" stroke="#2c2c2c" stroke-width="2.3"/><circle cx="15" cy="10" r="4.9" fill="#2c2c2c"/></svg>
<svg class="abs" style="left:1857px;top:1278px" width="30" height="20" viewBox="0 0 30 20"><path d="M2 10C5.5 3.8 10 1.9 15 1.9C20 1.9 24.5 3.8 28 10C24.5 16.2 20 18.1 15 18.1C10 18.1 5.5 16.2 2 10Z" fill="#e8e8e8" stroke="#2c2c2c" stroke-width="2.3"/><circle cx="15" cy="10" r="4.9" fill="#2c2c2c"/></svg>
<div class="t" style="left:2063.6px;top:1214.2px;font-size:22px;font-weight:400;color:#262626;letter-spacing:0.75px;">Dimension</div>
<svg class="abs" style="left:2044px;top:1249px" width="18" height="15"><path d="M1.5 1.5L15 7.2L1.5 12.9Z" fill="#262626"/></svg>
<div class="t" style="left:2067.8px;top:1246.1px;font-size:22px;font-weight:400;color:#262626;letter-spacing:0.75px;">Lighting</div>
<svg class="abs" style="left:1985px;top:1276px" width="32" height="24"><path d="M3.8 12.5L10.8 19.2L27 4.2" stroke="#111" stroke-width="3.3" fill="none" stroke-linejoin="round" stroke-linecap="round"/></svg>
<div class="t" style="left:2063.6px;top:1278.5px;font-size:22px;font-weight:700;color:#111;letter-spacing:0.75px;">None</div></body></html>
